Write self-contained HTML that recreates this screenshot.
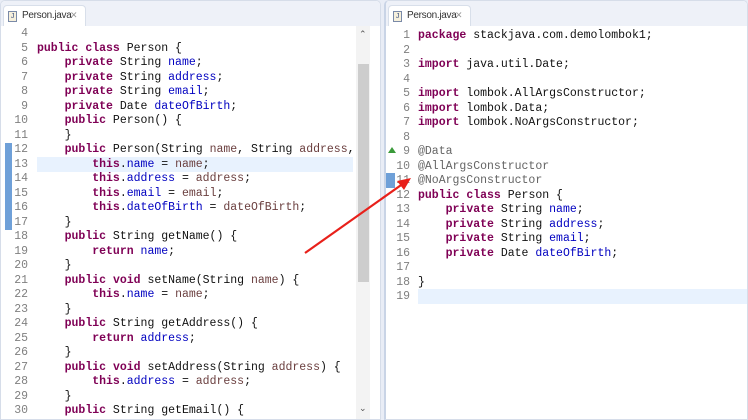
<!DOCTYPE html>
<html><head><meta charset="utf-8"><style>
*{margin:0;padding:0;box-sizing:border-box}
body{width:748px;height:420px;background:#e9edf6;position:relative;overflow:hidden;font-family:"Liberation Mono",monospace}
.panel{position:absolute;top:0;background:#fff;border:1px solid #d6dde9;border-radius:5px 5px 0 0;overflow:hidden}
.tabbar{position:absolute;left:0;right:0;top:0;height:25px;background:#eef1f8}
.tab{position:absolute;left:2px;top:4px;height:21px;width:83px;background:#fff;border:1px solid #d8dfea;border-bottom:none;border-radius:4px 4px 0 0;font-family:"Liberation Sans",sans-serif;font-size:10px;color:#333;padding:4px 0 0 18px;letter-spacing:-0.3px}
.tab .ic{position:absolute;left:4px;top:5px;width:9px;height:11px;border:1px solid #7a8aa8;background:#f6f0dc;font-size:7px;line-height:9px;text-align:center;color:#3a5080}
.tab .x{position:absolute;left:66px;top:4px;color:#999;font-size:9px}
.code{position:absolute;font-size:11.5px;line-height:14.5px;white-space:pre;color:#111}
.ln{position:absolute;font-size:11.5px;line-height:14.5px;white-space:pre;color:#808080;text-align:right;font-family:"Liberation Mono",monospace}
.k{color:#7f0055;font-weight:bold}
.f{color:#0000c0}
.p{color:#6a3e3e}
.a{color:#646464}
</style></head><body>
<div class="panel" style="left:0;width:381px;height:420px">
 <div class="tabbar"></div>
 <div class="tab"><span class="ic">J</span>Person.java<span class="x">✕</span></div>
 <div style="position:absolute;left:36px;top:156px;width:316px;height:15px;background:#e8f2fe"></div>
 <div style="position:absolute;left:4px;top:142px;width:7px;height:87px;background:#6fa0d8"></div>
 <div style="position:absolute;left:355px;top:25px;width:14px;height:395px;background:#f3f3f3"></div>
 <div style="position:absolute;left:357px;top:63px;width:11px;height:218px;background:#cdcdcd"></div>
 <div style="position:absolute;left:358px;top:28px;font-size:9px;color:#555;font-family:'Liberation Sans'">⌃</div>
 <div style="position:absolute;left:358px;top:402px;font-size:9px;color:#555;font-family:'Liberation Sans'">⌄</div>
 <div class="ln" style="left:0;top:26px;width:27px">4
5
6
7
8
9
10
11
12
13
14
15
16
17
18
19
20
21
22
23
24
25
26
27
28
29
30</div>
 <div class="code" style="left:36px;top:26px">
<span class="k">public</span> <span class="k">class</span> Person {
    <span class="k">private</span> String <span class="f">name</span>;
    <span class="k">private</span> String <span class="f">address</span>;
    <span class="k">private</span> String <span class="f">email</span>;
    <span class="k">private</span> Date <span class="f">dateOfBirth</span>;
    <span class="k">public</span> Person() {
    }
    <span class="k">public</span> Person(String <span class="p">name</span>, String <span class="p">address</span>,
        <span class="k">this</span>.<span class="f">name</span> = <span class="p">name</span>;
        <span class="k">this</span>.<span class="f">address</span> = <span class="p">address</span>;
        <span class="k">this</span>.<span class="f">email</span> = <span class="p">email</span>;
        <span class="k">this</span>.<span class="f">dateOfBirth</span> = <span class="p">dateOfBirth</span>;
    }
    <span class="k">public</span> String getName() {
        <span class="k">return</span> <span class="f">name</span>;
    }
    <span class="k">public</span> <span class="k">void</span> setName(String <span class="p">name</span>) {
        <span class="k">this</span>.<span class="f">name</span> = <span class="p">name</span>;
    }
    <span class="k">public</span> String getAddress() {
        <span class="k">return</span> <span class="f">address</span>;
    }
    <span class="k">public</span> <span class="k">void</span> setAddress(String <span class="p">address</span>) {
        <span class="k">this</span>.<span class="f">address</span> = <span class="p">address</span>;
    }
    <span class="k">public</span> String getEmail() {</div>
</div>
<div class="panel" style="left:384px;width:364px;height:420px;border-left:2px solid #c9d4e6">
 <div class="tabbar"></div>
 <div class="tab"><span class="ic">J</span>Person.java<span class="x">✕</span></div>
 <div style="position:absolute;left:32px;top:288px;width:340px;height:15px;background:#e8f2fe"></div>
 <div style="position:absolute;left:0;top:172px;width:9px;height:15px;background:#6fa0d8"></div>
 <div style="position:absolute;left:2px;top:146px;width:0;height:0;border-left:4px solid transparent;border-right:4px solid transparent;border-bottom:6px solid #3a9a3a"></div>
 <div class="ln" style="left:0;top:28px;width:24px">1
2
3
4
5
6
7
8
9
10
11
12
13
14
15
16
17
18
19</div>
 <div class="code" style="left:32px;top:28px"><span class="k">package</span> stackjava.com.demolombok1;

<span class="k">import</span> java.util.Date;

<span class="k">import</span> lombok.AllArgsConstructor;
<span class="k">import</span> lombok.Data;
<span class="k">import</span> lombok.NoArgsConstructor;

<span class="a">@Data</span>
<span class="a">@AllArgsConstructor</span>
<span class="a">@NoArgsConstructor</span>
<span class="k">public</span> <span class="k">class</span> Person {
    <span class="k">private</span> String <span class="f">name</span>;
    <span class="k">private</span> String <span class="f">address</span>;
    <span class="k">private</span> String <span class="f">email</span>;
    <span class="k">private</span> Date <span class="f">dateOfBirth</span>;

}
</div>
</div>
<svg style="position:absolute;left:0;top:0" width="748" height="420">
 <line x1="305" y1="253" x2="404" y2="183" stroke="#e8201a" stroke-width="2.2"/>
 <polygon points="411,178 397,181 404,190" fill="#e8201a"/>
</svg>
</body></html>
